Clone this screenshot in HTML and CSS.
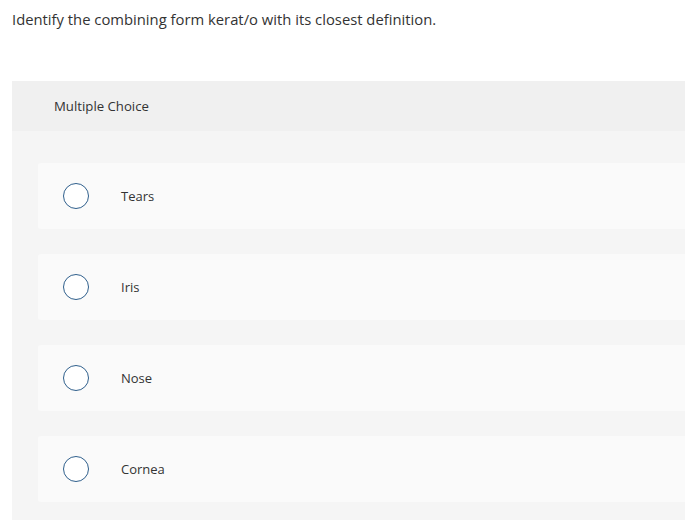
FILE: index.html
```html
<!DOCTYPE html>
<html>
<head>
<meta charset="utf-8">
<link rel="stylesheet" href="styles.css">
</head>
<body>
<div class="page">
  <p class="question">Identify the combining form kerat/o with its closest definition.</p>
  <div class="panel">
    <div class="panel-head">Multiple Choice</div>
    <div class="panel-body">
      <div class="choice"><span class="radio"></span><span class="label">Tears</span></div>
      <div class="choice"><span class="radio"></span><span class="label">Iris</span></div>
      <div class="choice"><span class="radio"></span><span class="label">Nose</span></div>
      <div class="choice"><span class="radio"></span><span class="label">Cornea</span></div>
    </div>
  </div>
</div>
</body>
</html>
```
FILE: styles.css
```css
html, body {
  margin: 0;
  padding: 0;
  background: #ffffff;
}
.page {
  padding-left: 12px;
  font-family: "Open Sans", Lato, sans-serif;
  color: #333333;
  overflow: hidden;
  height: 520px;
}
.question {
  margin: 0;
  padding-top: 9px;
  font-size: 14.8px;
  line-height: 20px;
  height: 72px;
}
.panel {
  background: #f5f5f5;
  width: 700px;
}
.panel-head {
  background: #f0f0f0;
  height: 50px;
  display: flex;
  align-items: center;
  padding-left: 42px;
  font-size: 13.2px;
}
.panel-body {
  padding: 32px 0 40px 26px;
  display: flex;
  flex-direction: column;
  gap: 25px;
}
.choice {
  background: #fafafa;
  height: 66px;
  display: flex;
  align-items: center;
  padding-left: 25px;
  border-radius: 3px 0 0 3px;
}
.radio {
  width: 24px;
  height: 24px;
  border: 1.5px solid #2f5f8c;
  border-radius: 50%;
  background: #ffffff;
  flex: none;
}
.label {
  margin-left: 32px;
  font-size: 13px;
}
```
